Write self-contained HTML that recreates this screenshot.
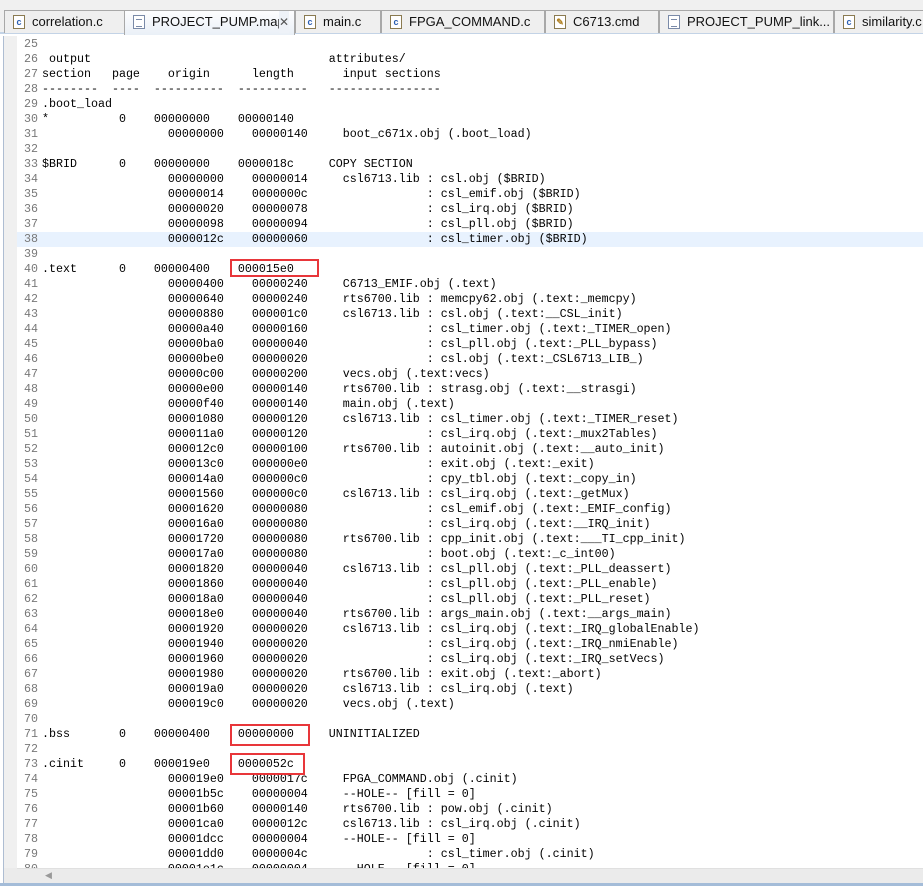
<!DOCTYPE html>
<html><head><meta charset="utf-8"><style>
*{margin:0;padding:0;box-sizing:border-box}
body{width:923px;height:886px;overflow:hidden;background:#fff;position:relative;font-family:"Liberation Sans",sans-serif}
#top{position:absolute;left:0;top:0;width:923px;height:11px;background:#f0f0f0}
#tabs{position:absolute;left:0;top:10px;width:923px;height:24px;background:#f0f0f0;border-bottom:2px solid #c3d3e6}
.tab{position:absolute;top:0;height:23px;border:1px solid #a8a8a8;border-bottom:none;background:#efefef;font-size:13px;color:#111;line-height:22px;padding-left:27px;white-space:nowrap;overflow:hidden}
.tab.act{background:linear-gradient(#fdfdfe,#eaf0f7);height:25px}
.ic{position:absolute;left:8px;top:4px;width:12px;height:14px;border:1px solid #8a7a50;background:#fff;font-size:9px;line-height:12px;color:#2a5db0;text-align:center;font-weight:bold}
.ic.doc{border-color:#7a8aa8}
.ic.doc:before{content:"";position:absolute;left:2px;top:3px;width:6px;height:6px;border-top:1px solid #7a8aa8;border-bottom:1px solid #7a8aa8}
.x{position:absolute;right:5px;top:0;font-size:12px;color:#555;background:#eef2f8}
#gut{position:absolute;left:3px;top:0;width:14px;height:832px;background:#f0f0f0;border-left:1px solid #aebdd2}
#nums{position:absolute;left:0;top:1px;width:38px;text-align:right;color:#787878;font-family:"Liberation Mono",monospace;font-size:11.67px;line-height:15px;white-space:pre}
#code{position:absolute;left:42px;top:1px;color:#000;font-family:"Liberation Mono",monospace;font-size:11.67px;line-height:15px;white-space:pre}
#hl{position:absolute;left:17px;top:196px;width:906px;height:15px;background:#e8f2fe}
#clip{position:absolute;left:0;top:36px;width:923px;height:832px;overflow:hidden}
.rb{position:absolute;border:2px solid #e8363a}
#sb{position:absolute;left:17px;top:868px;width:906px;height:15px;background:#ebebeb;border-top:1px solid #e0e0e0;font-size:9px;color:#999;padding-left:28px;line-height:13px}
#bot{position:absolute;left:0;top:883px;width:923px;height:3px;background:#a4bcd8}
#lb{position:absolute;left:3px;top:868px;width:14px;height:15px;background:#ebebeb;border-left:1px solid #aebdd2}
</style></head><body>
<div id="top"></div>
<div id="tabs">
<div class="tab" style="left:4px;width:121px"><span class="ic">c</span>correlation.c</div>
<div class="tab act" style="left:124px;width:171px"><span class="ic doc"></span>PROJECT_PUMP.map<span class="x">&#x2715;</span></div>
<div class="tab" style="left:295px;width:86px"><span class="ic">c</span>main.c</div>
<div class="tab" style="left:381px;width:164px"><span class="ic">c</span>FPGA_COMMAND.c</div>
<div class="tab" style="left:545px;width:114px"><span class="ic" style="color:#b08020">&#x270e;</span>C6713.cmd</div>
<div class="tab" style="left:659px;width:175px"><span class="ic doc"></span>PROJECT_PUMP_link...</div>
<div class="tab" style="left:834px;width:100px"><span class="ic">c</span>similarity.c</div>
</div>
<div id="clip">
<div id="gut"></div>
<div id="hl"></div>
<div id="nums">25
26
27
28
29
30
31
32
33
34
35
36
37
38
39
40
41
42
43
44
45
46
47
48
49
50
51
52
53
54
55
56
57
58
59
60
61
62
63
64
65
66
67
68
69
70
71
72
73
74
75
76
77
78
79
80</div>
<div id="code">
 output                                  attributes/
section   page    origin      length       input sections
--------  ----  ----------  ----------   ----------------
.boot_load 
*          0    00000000    00000140     
                  00000000    00000140     boot_c671x.obj (.boot_load)

$BRID      0    00000000    0000018c     COPY SECTION
                  00000000    00000014     csl6713.lib : csl.obj ($BRID)
                  00000014    0000000c                 : csl_emif.obj ($BRID)
                  00000020    00000078                 : csl_irq.obj ($BRID)
                  00000098    00000094                 : csl_pll.obj ($BRID)
                  0000012c    00000060                 : csl_timer.obj ($BRID)

.text      0    00000400    000015e0     
                  00000400    00000240     C6713_EMIF.obj (.text)
                  00000640    00000240     rts6700.lib : memcpy62.obj (.text:_memcpy)
                  00000880    000001c0     csl6713.lib : csl.obj (.text:__CSL_init)
                  00000a40    00000160                 : csl_timer.obj (.text:_TIMER_open)
                  00000ba0    00000040                 : csl_pll.obj (.text:_PLL_bypass)
                  00000be0    00000020                 : csl.obj (.text:_CSL6713_LIB_)
                  00000c00    00000200     vecs.obj (.text:vecs)
                  00000e00    00000140     rts6700.lib : strasg.obj (.text:__strasgi)
                  00000f40    00000140     main.obj (.text)
                  00001080    00000120     csl6713.lib : csl_timer.obj (.text:_TIMER_reset)
                  000011a0    00000120                 : csl_irq.obj (.text:_mux2Tables)
                  000012c0    00000100     rts6700.lib : autoinit.obj (.text:__auto_init)
                  000013c0    000000e0                 : exit.obj (.text:_exit)
                  000014a0    000000c0                 : cpy_tbl.obj (.text:_copy_in)
                  00001560    000000c0     csl6713.lib : csl_irq.obj (.text:_getMux)
                  00001620    00000080                 : csl_emif.obj (.text:_EMIF_config)
                  000016a0    00000080                 : csl_irq.obj (.text:__IRQ_init)
                  00001720    00000080     rts6700.lib : cpp_init.obj (.text:___TI_cpp_init)
                  000017a0    00000080                 : boot.obj (.text:_c_int00)
                  00001820    00000040     csl6713.lib : csl_pll.obj (.text:_PLL_deassert)
                  00001860    00000040                 : csl_pll.obj (.text:_PLL_enable)
                  000018a0    00000040                 : csl_pll.obj (.text:_PLL_reset)
                  000018e0    00000040     rts6700.lib : args_main.obj (.text:__args_main)
                  00001920    00000020     csl6713.lib : csl_irq.obj (.text:_IRQ_globalEnable)
                  00001940    00000020                 : csl_irq.obj (.text:_IRQ_nmiEnable)
                  00001960    00000020                 : csl_irq.obj (.text:_IRQ_setVecs)
                  00001980    00000020     rts6700.lib : exit.obj (.text:_abort)
                  000019a0    00000020     csl6713.lib : csl_irq.obj (.text)
                  000019c0    00000020     vecs.obj (.text)

.bss       0    00000400    00000000     UNINITIALIZED

.cinit     0    000019e0    0000052c     
                  000019e0    0000017c     FPGA_COMMAND.obj (.cinit)
                  00001b5c    00000004     --HOLE-- [fill = 0]
                  00001b60    00000140     rts6700.lib : pow.obj (.cinit)
                  00001ca0    0000012c     csl6713.lib : csl_irq.obj (.cinit)
                  00001dcc    00000004     --HOLE-- [fill = 0]
                  00001dd0    0000004c                 : csl_timer.obj (.cinit)
                  00001e1c    00000004     --HOLE-- [fill = 0]</div>
</div>
<div class="rb" style="left:230px;top:259px;width:89px;height:18px"></div>
<div class="rb" style="left:230px;top:724px;width:80px;height:22px"></div>
<div class="rb" style="left:230px;top:753px;width:75px;height:22px"></div>
<div id="lb"></div>
<div id="sb">&#9664;</div>
<div id="bot"></div>
</body></html>
